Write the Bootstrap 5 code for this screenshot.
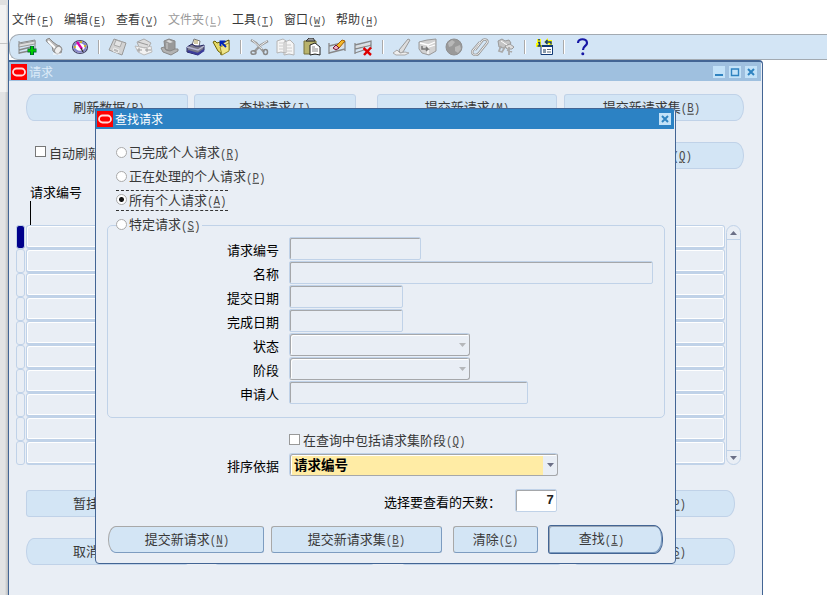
<!DOCTYPE html>
<html lang="zh-CN">
<head>
<meta charset="utf-8">
<meta name="viewport" content="width=device-width, initial-scale=1">
<title>查找请求</title>
<link href="https://cdn.jsdelivr.net/npm/bootstrap@5.3.0/dist/css/bootstrap.min.css" rel="stylesheet">
<style>
:root{--pane:#e9eef5;--line:#c0d2e8;--face:#d3e5f5;--edge:#436594;--dim:#a5a7aa}
body{width:827px;height:595px;overflow:hidden;background:#fff;font:13px/24px "Liberation Sans","Noto Sans CJK SC",sans-serif;color:#383838}
.page-edge{width:9px;flex:none;border-right:1px solid var(--edge);background:linear-gradient(90deg,#e2e3e4 60%,#b9bbbd)}
.page-edge .upper{height:92px;background:linear-gradient(90deg,#f2f2f2 70%,#cfcfcf);border-top:5px solid #e0e0e0}
.page-edge .rule{height:39px;border-bottom:1px solid #c4c4c4}
.desk{width:818px;height:595px}
.key{display:inline-block;width:19.5px;text-align:center;font-family:"Liberation Mono",monospace;font-size:10.8px;color:#4a4a4a;white-space:nowrap;transform:scaleY(1.18)}
.key u{text-underline-offset:1px}
.menu-strip{height:34px;padding:8px 0 0 3px;gap:10px;font-size:12px;background:#fff}
.menu-strip .key{width:18px;font-size:10px}
.menu-strip .off,.menu-strip .off .key{color:#999}
.tools{height:26px;background:var(--face);border:1px solid #a3aab1;border-right:0;border-radius:10px 0 0 9px;padding-left:5px}
.tools>svg{flex:none;width:20px;height:18px;margin:0 3px}
.tools>i{flex:none;width:2px;height:14px;margin:0 5px;border-left:1px solid #aaa;border-right:1px solid #fff}
.win{position:absolute;background:var(--pane);border:1px solid var(--edge)}
.win-main{left:8px;top:60px;width:755px;height:560px;border-radius:0 4px 0 0;border-top-width:2px}
.win-find{left:95px;top:108px;width:581px;height:456px;border-radius:0 4px 4px 4px;overflow:hidden}
.cap{height:20px;line-height:20px;font-size:12px;padding:0 4px 0 2px;color:#fff}
.cap>span:first-of-type{padding:2px 0 0 2px}
.win-main .cap{height:19px;margin-right:1px;background:#9fc0df;color:#dcebf8}
.win-find .cap{background:#2c82c4;margin-right:1px;padding:0 1px}
.cap svg{flex:none}
.push{height:27px;background:var(--face);border:1px solid var(--line);line-height:25px;text-align:center;border-radius:3px;white-space:nowrap;flex:none}
.round-s{border-top-left-radius:8px 13px;border-bottom-left-radius:8px 13px}
.round-e{border-top-right-radius:9px 13px;border-bottom-right-radius:9px 13px}
.w162{width:162px}.w180{width:180px}.w159{width:159px}.w160{width:160px}
.row-a{padding:13px 0 0 17px}
.row-b{padding:21px 18px 0 25px}
.tickbox{flex:none;width:11px;height:11px;background:#fff;border:1px solid #777}
.col-name{color:#000;height:32px;padding:12px 0 0 21px}
.caret{width:1px;height:24px;background:#000;margin-left:21px}
.recs{margin-left:7px}
.rec{height:24px;width:709px}
.rec .mark-cell{width:9px;height:24px;border:1px solid var(--line);border-radius:3px;margin-right:1px}
.rec .cell-box{flex:1;height:24px;border:1px solid var(--line);border-bottom-width:2px;border-radius:3px;box-shadow:inset 1px 1px #fff,inset -1px -1px #fff}
.rec.on .mark-cell{background:#00008b}
.vbar{width:15px;height:240px;margin-left:1px;border:1px solid var(--line);border-radius:8px}
.vbar div{height:14px;line-height:0;text-align:center;padding-top:5px}
.vbar div:first-child{border-bottom:1px solid var(--line)}
.vbar div:last-child{border-top:1px solid var(--line)}
.opt{height:24px;margin-left:20px}
.radio{flex:none;width:11px;height:11px;border-radius:50%;border:1px solid #aaa;background:#fff;margin-right:2px;margin-top:-2px}
.radio.on{background:radial-gradient(circle,#111 0 2px,#fff 3px)}
.opt .txt{padding-top:1px}
.opt.now{width:112px;height:21px;line-height:21px;margin-top:1px;margin-bottom:2px;border-top:1px dashed #333;border-bottom:1px dashed #333}
.group{margin:14px 0 0 11px;width:558px;height:193px;border:1px solid var(--line);border-radius:5px}
.group .opt{width:86px;margin:-13px 0 0 8px;background:linear-gradient(var(--pane),var(--pane)) right/92% 100% no-repeat}
.fld{height:24px}
.fld .lbl{width:171px;text-align:right;margin-right:10px;color:#000;padding-top:2px}
.fld.out .lbl{width:183px}
.inp{height:23px;border:1px solid var(--line);border-radius:2px;box-shadow:inset 1px 1px var(--dim)}
.combo{height:23px;border:1px solid var(--dim);border-top-color:var(--line);border-left-color:var(--line);border-radius:3px;box-shadow:inset 1px 1px var(--dim),inset 2px 2px #fff;padding:2px 3px 1px}
.combo svg{margin:0 0 0 auto}
.i-no{width:132px}.i-name{width:364px}.i-date{width:114px}.i-sel{width:181px}.i-who{width:239px}.i-sort{width:269px;padding-left:2px}
.picked{flex:1;height:19px;line-height:20px;background:#ffeca5;color:#000;font-weight:700;padding-left:2px;font-size:13.5px}
.i-sort svg{margin-left:4px}
.days{margin-top:12px}
.days .lbl{width:405px;margin-right:14px;color:#000;text-align:right}
.i-days{width:42px;background:#fff;text-align:right;padding-right:2px;line-height:22px;font-weight:700;color:#222;font-family:"Liberation Mono",monospace;font-size:13px}
.acts{margin:13px 0 0 12px}
.acts .push{border-color:#a8a8a8 #7d9cc0 #7d9cc0 #a8a8a8}
.acts .push.main{height:29px;margin-top:-1px;line-height:26px;border:1.5px solid var(--edge);box-shadow:inset 1px 1px #9ba6b5,inset -1px -1px #7d9cc0}
</style>
<script src="https://cdn.jsdelivr.net/npm/bootstrap@5.3.0/dist/js/bootstrap.bundle.min.js"></script>
</head>
<body class="d-flex position-relative">
<div class="page-edge"><div class="upper"><div class="rule"></div></div></div>
<div class="desk">
  <nav class="menu-strip d-flex align-items-start">
    <span>文件<span class="key">(<u>F</u>)</span></span><span>编辑<span class="key">(<u>E</u>)</span></span><span>查看<span class="key">(<u>V</u>)</span></span><span class="off">文件夹<span class="key">(<u>L</u>)</span></span><span>工具<span class="key">(<u>T</u>)</span></span><span>窗口<span class="key">(<u>W</u>)</span></span><span>帮助<span class="key">(<u>H</u>)</span></span>
  </nav>
  <div class="tools d-flex align-items-center">
    <svg viewBox="0 0 20 18"><path d="M1 3v13M1 5l16-3v9" fill="none" stroke="#888"/><path d="M1 6l16-3v3L1 9z" fill="#ddd" stroke="#999"/><path d="M1 12l12-3M1 15l10-2" stroke="#888" stroke-width="1.600"/><path d="M14 8v9M9.500 12.500h9" stroke="#063" stroke-width="4"/><path d="M14 8.500v8M10 12.500h8" stroke="#0c0" stroke-width="2"/></svg>
    <svg viewBox="0 0 20 18"><path d="M2 2l3-2 4 4 4 3 3 1 2 3-1 4-4 1-4-3-1-5-5-4z" fill="#bbb" stroke="#888"/><path d="M4 3l7 7" stroke="#fff" stroke-width="2"/><ellipse cx="14" cy="12" rx="3" ry="4" transform="rotate(35 14 12)" fill="#eee" stroke="#999"/><path d="M9 16h8" stroke="#fff"/></svg>
    <svg viewBox="0 0 20 18"><ellipse cx="10" cy="9" rx="7.500" ry="6.500" fill="#e8e8f2" stroke="#446" stroke-width="1.200"/><ellipse cx="10" cy="9" rx="5.800" ry="4.800" fill="#fff" stroke="#8585c8" stroke-width="2"/><path d="M7 4l5 7" stroke="#e000a8" stroke-width="2.300"/><path d="M11 10l2 4" stroke="#333" stroke-width="1.300"/><path d="M10 4h2M4 9h2M14 8h2" stroke="#db0" stroke-width="1.500"/></svg>
    <i></i>
    <svg viewBox="0 0 20 18"><path d="M6 1l12 4-4 12-13-5z" fill="#d2d2d2" stroke="#999"/><path d="M8 2l6 2-2 5-6-2z" fill="#e4e4e4" stroke="#aaa"/><path d="M6 10l5 2-1 3-5-2z" fill="#bbb" stroke="#eee"/></svg>
    <svg viewBox="0 0 20 18"><path d="M3 4l7-3 7 4-3 5-9-1z" fill="#ddd" stroke="#aaa"/><path d="M1 8l10 2 6-2 1 6-8 3-6-3z" fill="#f2f2f2" stroke="#bbb"/><path d="M4 4l10 3M5 10v4M3 12h5M13 10v4M11 12h6" stroke="#999"/></svg>
    <svg viewBox="0 0 20 18"><path d="M4 3l5-2 6 2v8l-5 3-5-3z" fill="#999" stroke="#888"/><path d="M6 3l3-1 4 2-3 1z" fill="#ddd"/><path d="M1 10l3-1 2 3 4 1 5-2 3 0v2l-7 4-8-3z" fill="#b2b2b2" stroke="#888"/><path d="M7 5v6" stroke="#ccc"/></svg>
    <svg viewBox="0 0 20 18"><path d="M6 7l2-6 6 2-1 6z" fill="#fff" stroke="#777"/><path d="M8 3h4M8 5h4" stroke="#a95"/><path d="M1 9l5-3 3 2h5l4-1v5l-6 5-11-3z" fill="#778" stroke="#202060"/><path d="M1 9l11 3 6-4" fill="none" stroke="#b8b8d4" stroke-width="1.500"/><path d="M2 13l10 3 6-4" fill="none" stroke="#3b3b9a" stroke-width="2.200"/></svg>
    <svg viewBox="0 0 20 18"><path d="M8 6l9-4v10l-8 5z" fill="#f3eaa2" stroke="#544a00"/><path d="M1 4l2-1 2 2 3-1 2 12-4-3z" fill="#e6da68" stroke="#6b6000"/><path d="M8 9l9-4v8l-7 4z" fill="#efe58a" stroke="#998c30"/><path d="M14 9L9 4M8.500 8V3.500h5" stroke="#0022bb" stroke-width="1.800" fill="none"/></svg>
    <i></i>
    <svg viewBox="0 0 20 18"><path d="M1 2l5 3 8 9M18 3l-7 4-7 7" stroke="#999" stroke-width="2.400" fill="none"/><path d="M2 2l10 9M17 3l-7 5" stroke="#eee"/><ellipse cx="3.500" cy="14.500" rx="2.500" ry="1.800" fill="none" stroke="#888" stroke-width="1.500"/><ellipse cx="15.500" cy="14" rx="2" ry="2.500" fill="none" stroke="#888" stroke-width="1.500"/></svg>
    <svg viewBox="0 0 20 18"><path d="M1 3l6-2 3 2v12l-5-1-4 1zM8 4l6-2 4 4v11l-5-1-5 1z" fill="#f5f5f5" stroke="#b4b4b4"/><path d="M3 5h4M3 8h4M3 11h4M10 7h5M10 10h6M10 13h6" stroke="#ccc"/></svg>
    <svg viewBox="0 0 20 18"><path d="M2 3h12v13H2z" fill="#b8b36c" stroke="#77733d"/><path d="M4 3l3-3h4l2 3z" fill="#999" stroke="#333"/><path d="M8 7l5-2 5 4v8l-5-1-5 1z" fill="#fff" stroke="#222"/><path d="M10 9h3M10 11h6M10 13h6" stroke="#888"/></svg>
    <svg viewBox="0 0 20 18"><path d="M1 5v11M1 8l16-4v9M1 15l16-4" fill="none" stroke="#888" stroke-width="1.300"/><path d="M2 10l14-4v3L2 13z" fill="#ddd"/><path d="M8 8l6-6 3 1-6 7z" fill="#f4b92c" stroke="#a66000"/><path d="M5 10l3-3 3 3-3 2z" fill="#eab1bd" stroke="#713"/></svg>
    <svg viewBox="0 0 20 18"><path d="M1 5v11M1 7l16-4v8M1 11l16-4M1 15l9-3" fill="none" stroke="#888" stroke-width="1.300"/><path d="M2 8l14-3v2L2 10z" fill="#ddd"/><path d="M9.500 10l7.500 7M17 9.500l-7 7.500" stroke="#d00" stroke-width="2.400"/></svg>
    <i></i>
    <svg viewBox="0 0 20 18"><path d="M7 12L16 1l2 1-7 12-3 1z" fill="#ddd" stroke="#999"/><path d="M1 15l4-3 3 3 5-1 4 1-4 2H4z" fill="#eee" stroke="#aaa"/></svg>
    <svg viewBox="0 0 20 18"><path d="M1 4l8-2 9-1v12l-7 4-7-2-3-4z" fill="#d2d2d2" stroke="#999"/><path d="M2 5l8 2 7-3M10 7v9M11 9l6-2" fill="none" stroke="#fff" stroke-width="1.300"/><path d="M4 8v3h6l-2-2M10 11l-2 2" stroke="#777" fill="none" stroke-width="1.500"/></svg>
    <svg viewBox="0 0 20 18"><circle cx="10" cy="9" r="8" fill="#999" stroke="#909090"/><path d="M4 5l4-3 3 2-3 4-3 1zM11 9l5-2 1 4-3 4-3-2z" fill="#b8b8b8"/></svg>
    <svg viewBox="0 0 20 18"><path d="M5 12l7-9c2-3 7-1 5 2l-8 10c-3 4-9 1-6-3l7-8" fill="none" stroke="#999" stroke-width="2.500"/><path d="M5 12l7-9c2-3 7-1 5 2l-8 10c-3 4-9 1-6-3l7-8" fill="none" stroke="#f2f2f2"/></svg>
    <svg viewBox="0 0 20 18"><path d="M2 3l4-2 3 2 4-1 2 3-3 4-5 1-4-1z" fill="#c4c4c4" stroke="#999"/><path d="M9 8l5-2 4 3-2 2h-5z" fill="#ddd" stroke="#999"/><path d="M5 8l-2 5 3 1 3-5M13 9v8M11 12l5 2" fill="none" stroke="#aaa" stroke-width="1.800"/><path d="M5 3l6 4" stroke="#fff"/></svg>
    <i></i>
    <svg viewBox="0 0 20 18" style="margin-left:4px"><path d="M6 7.500h11.500v9H6z" fill="#fff" stroke="#113a75"/><path d="M6 8h12" stroke="#113a75" stroke-width="2"/><path d="M8 11h3v4H8z" fill="#89a"/><path d="M12 11.500h4M12 14h4" stroke="#567"/><path d="M2 1h4v6h1v2H1V5h1zM9 4l4-4v2h4v5h-3V6h-1v1z" fill="#ff0"/><path d="M4 1v1.500M3 4.500h1.500v3M2.500 8h4" stroke="#113a75" stroke-width="1.600" fill="none"/><path d="M10.500 4h5.500v2.500M12.500 2l-2 2 2 2" stroke="#113a75" stroke-width="1.400" fill="none"/></svg>
    <i style="margin-right:4px"></i>
    <svg viewBox="0 0 20 18"><path d="M6 5c0-5 9-5 9 0 0 3-4 3-4 7" fill="none" stroke="#1717a5" stroke-width="2.200"/><circle cx="10.800" cy="15.700" r="1.500" fill="#1717a5"/></svg>
  </div>
</div>

<section class="win win-main">
  <header class="cap d-flex align-items-center">
    <svg width="16" height="16" viewBox="0 0 16 16"><path d="M0 0h16v16H0z" fill="#f00"/><rect x="2" y="4.500" width="12" height="7" rx="3.500" fill="none" stroke="#ffdada" stroke-width="1.800"/></svg><span>请求</span>
    <span class="ms-auto d-flex gap-1">
      <svg width="12" height="12"><path d="M0 0h12v12H0z" fill="#c3e2f8"/><path d="M2 9h8" stroke="#2f83c0" stroke-width="2"/></svg>
      <svg width="12" height="12"><path d="M0 0h12v12H0z" fill="#c3e2f8"/><path d="M2.500 3h7v6.500h-7zM2 3h8" fill="none" stroke="#2f83c0" stroke-width="1.400"/></svg>
      <svg width="12" height="12"><path d="M0 0h12v12H0z" fill="#c3e2f8"/><path d="M3 3l6 6M9 3l-6 6" stroke="#2f83c0" stroke-width="2"/></svg>
    </span>
  </header>
  <div class="row-a d-flex">
    <div class="push round-s w162" style="padding-left:4px">刷新数据<span class="key">(<u>R</u>)</span></div>
    <div class="push w162" style="margin-left:6px">查找请求<span class="key">(<u>I</u>)</span></div>
    <div class="push w180" style="margin-left:21px">提交新请求<span class="key">(<u>M</u>)</span></div>
    <div class="push round-e w180" style="margin-left:7px;padding-right:5px">提交新请求集<span class="key">(<u>B</u>)</span></div>
  </div>
  <div class="row-b d-flex justify-content-between">
    <div class="d-flex"><span class="tickbox" style="margin:4px 3px 0 1px"></span>自动刷新</div>
    <div class="push round-e w180 text-end" style="padding-right:51px"><span class="key">(<u>Q</u>)</span></div>
  </div>
  <div class="col-name">请求编号</div>
  <div class="caret"></div>
  <div class="d-flex recs">
    <div>
      <div class="rec on d-flex"><span class="mark-cell"></span><span class="cell-box"></span></div>
      <div class="rec d-flex"><span class="mark-cell"></span><span class="cell-box"></span></div>
      <div class="rec d-flex"><span class="mark-cell"></span><span class="cell-box"></span></div>
      <div class="rec d-flex"><span class="mark-cell"></span><span class="cell-box"></span></div>
      <div class="rec d-flex"><span class="mark-cell"></span><span class="cell-box"></span></div>
      <div class="rec d-flex"><span class="mark-cell"></span><span class="cell-box"></span></div>
      <div class="rec d-flex"><span class="mark-cell"></span><span class="cell-box"></span></div>
      <div class="rec d-flex"><span class="mark-cell"></span><span class="cell-box"></span></div>
      <div class="rec d-flex"><span class="mark-cell"></span><span class="cell-box"></span></div>
      <div class="rec d-flex"><span class="mark-cell"></span><span class="cell-box"></span></div>
    </div>
    <div class="vbar d-flex flex-column justify-content-between">
      <div><svg width="7" height="4"><path d="M0 4l3.500-4L7 4z" fill="#6b6f86"/></svg></div>
      <div><svg width="7" height="4"><path d="M0 0l3.500 4L7 0z" fill="#6b6f86"/></svg></div>
    </div>
  </div>
  <div class="d-flex" style="padding:25px 0 0 17px">
    <div class="push w162 text-start" style="padding-left:46px">暂挂</div>
    <div class="push w159" style="margin-left:27px"></div>
    <div class="push w159" style="margin-left:28px"></div>
    <div class="push round-e w160 text-end" style="margin-left:14px;padding-right:48px"><span class="key">(<u>P</u>)</span></div>
  </div>
  <div class="d-flex" style="padding:21px 0 0 17px">
    <div class="push round-s w162 text-start" style="padding-left:46px">取消</div>
    <div class="push w159" style="margin-left:27px"></div>
    <div class="push w159" style="margin-left:28px"></div>
    <div class="push round-e w160 text-end" style="margin-left:14px;padding-right:48px"><span class="key">(<u>S</u>)</span></div>
  </div>
</section>

<section class="win win-find">
  <header class="cap d-flex align-items-center">
    <svg width="16" height="16" viewBox="0 0 16 16"><path d="M0 0h16v16H0z" fill="#f00"/><rect x="2" y="4.500" width="12" height="7" rx="3.500" fill="none" stroke="#ffdada" stroke-width="1.800"/></svg><span>查找请求</span>
    <svg class="ms-auto" style="margin-right:2px" width="12" height="12"><path d="M0 0h12v12H0z" fill="#c3e2f8"/><path d="M3 3l6 6M9 3l-6 6" stroke="#2f83c0" stroke-width="2"/></svg>
  </header>
  <div style="height:12px"></div>
  <div class="opt d-flex align-items-center"><span class="radio"></span><span class="txt">已完成个人请求<span class="key">(<u>R</u>)</span></span></div>
  <div class="opt d-flex align-items-center"><span class="radio"></span><span class="txt">正在处理的个人请求<span class="key">(<u>P</u>)</span></span></div>
  <div class="opt now d-flex align-items-center"><span class="radio on"></span><span class="txt">所有个人请求<span class="key">(<u>A</u>)</span></span></div>
  <div class="group">
    <div class="opt d-flex align-items-center"><span class="radio"></span><span class="txt">特定请求<span class="key">(<u>S</u>)</span></span></div>
    <div class="fld d-flex"><span class="lbl">请求编号</span><span class="inp i-no"></span></div>
    <div class="fld d-flex"><span class="lbl">名称</span><span class="inp i-name"></span></div>
    <div class="fld d-flex"><span class="lbl">提交日期</span><span class="inp i-date"></span></div>
    <div class="fld d-flex"><span class="lbl">完成日期</span><span class="inp i-date"></span></div>
    <div class="fld d-flex"><span class="lbl">状态</span><span class="combo i-sel d-flex align-items-center"><svg width="7" height="4"><path d="M0 0l3.500 4L7 0z" fill="#b5b7ba"/></svg></span></div>
    <div class="fld d-flex"><span class="lbl">阶段</span><span class="combo i-sel d-flex align-items-center"><svg width="7" height="4"><path d="M0 0l3.500 4L7 0z" fill="#b5b7ba"/></svg></span></div>
    <div class="fld d-flex"><span class="lbl">申请人</span><span class="inp i-who"></span></div>
  </div>
  <div class="d-flex" style="padding:11px 0 0 193px;height:35px"><span class="tickbox" style="margin:5px 3px 0 0;border-color:#999"></span>在查询中包括请求集阶段<span class="key">(<u>Q</u>)</span></div>
  <div class="fld out d-flex"><span class="lbl">排序依据</span><span class="combo i-sort d-flex align-items-center"><span class="picked">请求编号</span><svg width="7" height="4"><path d="M0 0l3.500 4L7 0z" fill="#6b6f86"/></svg></span></div>
  <div class="fld days d-flex"><span class="lbl">选择要查看的天数：</span><span class="inp i-days">7</span></div>
  <div class="acts d-flex">
    <div class="push round-s" style="width:156px;padding-left:2px">提交新请求<span class="key">(<u>N</u>)</span></div>
    <div class="push" style="width:171px;margin-left:7px">提交新请求集<span class="key">(<u>B</u>)</span></div>
    <div class="push" style="width:85px;margin-left:11px">清除<span class="key">(<u>C</u>)</span></div>
    <div class="push main round-e" style="width:115px;margin-left:10px;padding-right:8px">查找<span class="key">(<u>I</u>)</span></div>
  </div>
</section>
</body>
</html>
